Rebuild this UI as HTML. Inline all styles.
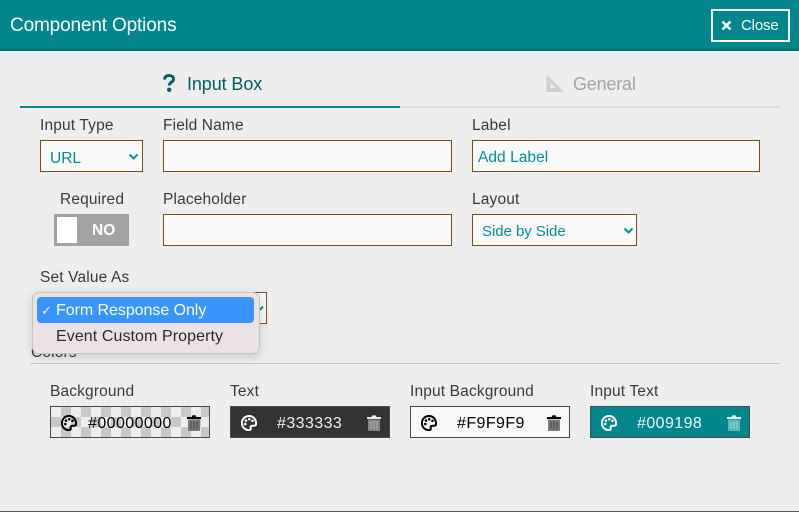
<!DOCTYPE html>
<html><head><meta charset="utf-8"><style>
html,body{margin:0;padding:0}
body{width:799px;height:512px;position:relative;overflow:hidden;background:#eee;font-family:"Liberation Sans",sans-serif;color:#3a3a3a}
.a{position:absolute;white-space:nowrap}
.l{font-size:15.5px;line-height:18px;letter-spacing:.15px;color:#3a3a3a}
.i{position:absolute;box-sizing:border-box;border:1px solid #7a5012;background:#f9f9f9;height:32px}
.c{position:absolute;box-sizing:border-box;top:406px;width:160px;height:32px;border:1px solid #4a4a4a}
.t{position:absolute;top:8px;font-size:16px;line-height:18px;letter-spacing:.42px;white-space:nowrap}
.c svg{position:absolute}
</style></head><body>
<div class="a" style="left:0;top:0;width:799px;height:49px;background:#00868b;border-bottom:2px solid #006f73"></div>
<div class="a" style="left:10px;top:14px;font-size:19px;line-height:24px;color:#fff;letter-spacing:-.15px">Component Options</div>
<div class="a" style="left:711px;top:9px;width:79px;height:33px;box-sizing:border-box;border:2px solid #fff"></div>
<svg class="a" style="left:721px;top:20px" width="11" height="11" viewBox="0 0 11 11"><path d="M1.500 1.500L9.500 9.500M9.500 1.500L1.500 9.500" stroke="#fff" stroke-width="2.600"/></svg>
<div class="a" style="left:741px;top:17px;font-size:15px;line-height:18px;color:#fff;letter-spacing:-.15px">Close</div>

<svg class="a" style="left:163px;top:74px" width="12" height="18" viewBox="0 0 12 18"><path d="M1.500 5.500C1.700 3 3.500 1.500 6 1.500C8.700 1.500 10.500 3 10.500 5.200C10.500 8.200 6.200 8.200 6.200 11.500" fill="none" stroke="#005f63" stroke-width="3"/><circle cx="6.200" cy="15.800" r="2.200" fill="#005f63"/></svg>
<div class="a" style="left:187px;top:72px;font-size:18px;line-height:24px;color:#005f63;letter-spacing:-.1px">Input Box</div>
<svg class="a" style="left:546px;top:74px" width="19" height="19" viewBox="0 0 19 19"><path fill-rule="evenodd" d="M0.500 0.500L18 18H0.500ZM4.500 9V14H9.500Z" fill="#cfcfcf"/></svg>
<div class="a" style="left:573px;top:72px;font-size:18px;line-height:24px;color:#a3a3a3;letter-spacing:-.2px">General</div>
<div class="a" style="left:20px;top:106px;width:380px;height:2px;background:#00868b"></div>
<div class="a" style="left:400px;top:106px;width:380px;height:2px;background:#ddd"></div>

<div class="a l" style="left:40px;top:117px">Input Type</div>
<div class="a l" style="left:163px;top:117px">Field Name</div>
<div class="a l" style="left:472px;top:117px">Label</div>
<div class="i" style="left:40px;top:140px;width:103px"></div>
<div class="a" style="left:50px;top:150px;font-size:15.500px;line-height:18px;color:#009198">URL</div>
<svg class="a" style="left:128px;top:153px" width="11" height="8" viewBox="0 0 11 8"><path d="M1.500 1.500L5.500 5.500L9.500 1.500" fill="none" stroke="#009198" stroke-width="2"/></svg>
<div class="i" style="left:163px;top:140px;width:289px"></div>
<div class="i" style="left:472px;top:140px;width:288px"></div>
<div class="a" style="left:478px;top:149px;font-size:15.500px;line-height:18px;color:#009198;letter-spacing:.05px">Add Label</div>

<div class="a l" style="left:60px;top:191px">Required</div>
<div class="a l" style="left:163px;top:191px">Placeholder</div>
<div class="a l" style="left:472px;top:191px">Layout</div>
<div class="a" style="left:54px;top:214px;width:75px;height:32px;background:#a3a3a3"></div>
<div class="a" style="left:57px;top:217px;width:20px;height:26px;background:#fff"></div>
<div class="a" style="left:92px;top:222px;font-size:15.500px;font-weight:bold;line-height:18px;color:#fff">NO</div>
<div class="i" style="left:163px;top:214px;width:289px"></div>
<div class="i" style="left:472px;top:214px;width:165px"></div>
<div class="a" style="left:482px;top:223px;font-size:15px;line-height:18px;color:#009198;letter-spacing:-.05px">Side by Side</div>
<svg class="a" style="left:623px;top:227px" width="11" height="8" viewBox="0 0 11 8"><path d="M1.500 1.500L5.500 5.500L9.500 1.500" fill="none" stroke="#009198" stroke-width="2"/></svg>

<div class="a l" style="left:40px;top:269px">Set Value As</div>
<div class="i" style="left:40px;top:292px;width:227px"></div>
<svg class="a" style="left:257px;top:304px" width="9" height="9" viewBox="0 0 9 9"><path d="M3 6L6 2.500" stroke="#009198" stroke-width="2"/></svg>

<div class="a l" style="left:31px;top:344px">Colors</div>
<div class="a" style="left:30px;top:363px;width:750px;height:1px;background:#c9c9c9"></div>

<div class="a" style="left:32px;top:292px;width:228px;height:62px;box-sizing:border-box;border:1px solid #c9c2c2;border-radius:7px;background:#ece2e3;box-shadow:0 3px 10px rgba(0,0,0,.16)"></div>
<div class="a" style="left:37px;top:297px;width:217px;height:26px;border-radius:4px;background:#3895fd"></div>
<div class="a" style="left:41px;top:303px;font-size:13px;line-height:16px;color:#fff">✓</div>
<div class="a" style="left:56px;top:302px;font-size:16px;line-height:18px;color:#fff;letter-spacing:-.05px">Form Response Only</div>
<div class="a" style="left:56px;top:328px;font-size:16px;line-height:18px;color:#2c2828;letter-spacing:.08px">Event Custom Property</div>

<div class="a l" style="left:50px;top:383px">Background</div>
<div class="a l" style="left:230px;top:383px">Text</div>
<div class="a l" style="left:410px;top:383px">Input Background</div>
<div class="a l" style="left:590px;top:383px">Input Text</div>

<svg width="0" height="0" style="position:absolute"><defs>
<g id="pal"><path d="M8 1C3.800 1 .9 4.200 .9 8.100C.9 12.200 4 15.100 8 15.100C9.400 15.100 10 14.300 9.700 13.200C9.300 11.700 10 10.700 11.500 10.700H13.300C14.500 10.700 15.100 9.900 15.100 8.600C15.100 4.200 12.200 1 8 1Z" fill="none" stroke="currentColor" stroke-width="2"/><circle cx="4.300" cy="9" r="1.300" fill="currentColor"/><circle cx="5" cy="5.600" r="1.300" fill="currentColor"/><circle cx="8.300" cy="4.200" r="1.300" fill="currentColor"/><circle cx="11.500" cy="5.800" r="1.300" fill="currentColor"/></g>
<g id="tr"><path d="M0 2H14V4H0Z M4.500 2L5.500 .3H8.500L9.500 2Z" fill="var(--a)"/><path d="M1 4.500H13V15.300Q13 16 12.300 16H1.700Q1 16 1 15.300Z" fill="var(--b)"/><path d="M4 6.500V14M7 6.500V14M10 6.500V14" stroke="var(--s)" stroke-width="1.300"/></g>
</defs></svg>

<div class="c" style="left:50px;background-color:#eee;background-image:conic-gradient(#c8c8c8 25%,transparent 0 50%,#c8c8c8 0 75%,transparent 0);background-size:20px 20px;background-position:0 0;color:#000">
<svg style="left:10px;top:8px" width="16" height="16" viewBox="0 0 16 16"><use href="#pal"/></svg>
<span class="t" style="left:37px">#00000000</span>
<svg style="left:136px;top:8px;--a:#000;--b:#777;--s:#555" width="14" height="16" viewBox="0 0 14 16"><use href="#tr"/></svg></div>

<div class="c" style="left:230px;background:#333;color:#fff">
<svg style="left:10px;top:8px" width="16" height="16" viewBox="0 0 16 16"><use href="#pal"/></svg>
<span class="t" style="left:46px;color:#f0f0f0">#333333</span>
<svg style="left:136px;top:8px;--a:#e8e8e8;--b:#858585;--s:#a5a5a5" width="14" height="16" viewBox="0 0 14 16"><use href="#tr"/></svg></div>

<div class="c" style="left:410px;background:#f9f9f9;color:#000">
<svg style="left:10px;top:8px" width="16" height="16" viewBox="0 0 16 16"><use href="#pal"/></svg>
<span class="t" style="left:46px">#F9F9F9</span>
<svg style="left:136px;top:8px;--a:#000;--b:#7c7c7c;--s:#555" width="14" height="16" viewBox="0 0 14 16"><use href="#tr"/></svg></div>

<div class="c" style="left:590px;background:#00868b;color:#fff">
<svg style="left:10px;top:8px" width="16" height="16" viewBox="0 0 16 16"><use href="#pal"/></svg>
<span class="t" style="left:46px;color:#f0f8f8">#009198</span>
<svg style="left:136px;top:8px;--a:#dff;--b:#5bb4b7;--s:#8ed0d2" width="14" height="16" viewBox="0 0 14 16"><use href="#tr"/></svg></div>

<div class="a" style="left:0;top:511px;width:799px;height:1px;background:#555"></div>
</body></html>
